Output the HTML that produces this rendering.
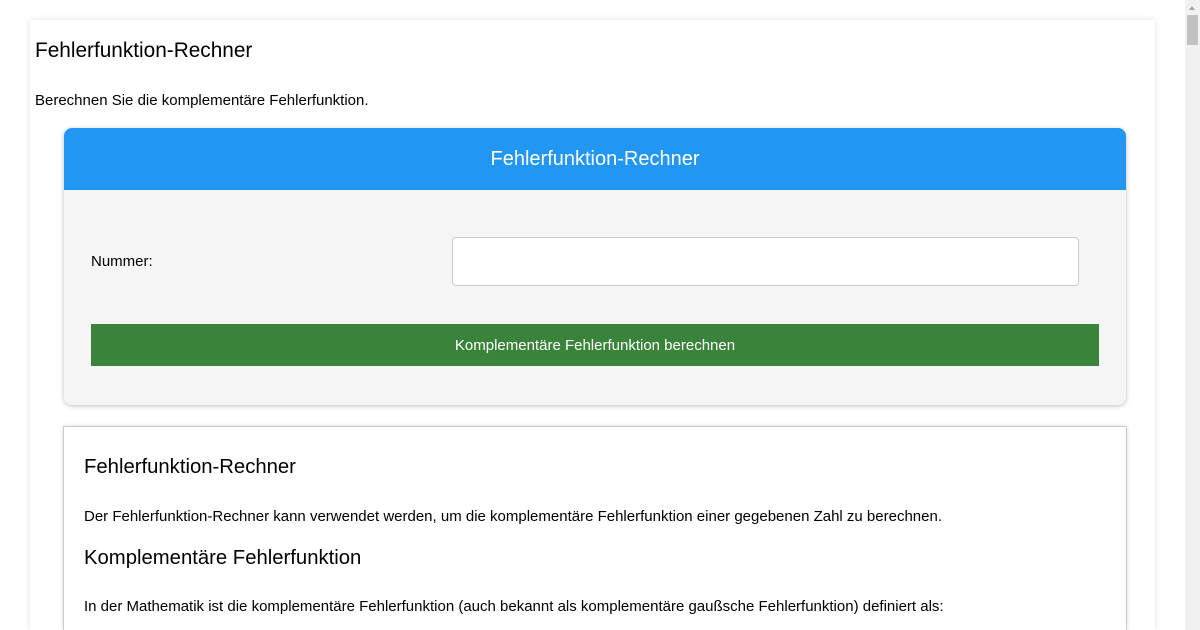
<!DOCTYPE html>
<html style="height:630px;overflow:hidden"><head><meta charset="utf-8"><style>
body{margin:0;background:#fff;font-family:"Liberation Sans",sans-serif;width:1200px;height:630px;overflow:hidden;position:relative;color:#000}
.sb{position:absolute;left:1185px;top:0;width:15px;height:630px;background:#f1f1f1}
.sb .th{position:absolute;left:2px;top:15px;width:11px;height:30px;background:#c1c1c1}
.sb .ar{position:absolute;left:4px;top:6px;width:0;height:0;border-left:3.5px solid transparent;border-right:3.5px solid transparent;border-bottom:4px solid #a3a3a3}
.wrap{position:absolute;left:30px;top:20px;width:1125px;height:610px;overflow:hidden;background:#fff;box-shadow:0 0 6px rgba(0,0,0,.12)}
h1{position:absolute;left:5px;top:19px;margin:0;font-size:20.8px;font-weight:normal}
.intro{position:absolute;left:5px;top:72px;font-size:15px}
.card{position:absolute;left:34px;top:108px;width:1062px;height:277px;background:#f5f5f5;border-radius:8px;box-shadow:0 1px 5px rgba(0,0,0,.25);overflow:hidden}
.hd{height:62px;background:#2196f3;color:#fff;font-size:20px;text-align:center;line-height:63px}
.lbl{position:absolute;left:27px;top:125px;font-size:15px}
.inp{position:absolute;left:388px;top:109px;width:625px;height:47px;background:#fff;border:1px solid #ccc;border-radius:4px}
.btn{position:absolute;left:27px;top:196px;width:1008px;height:42px;background:#3a833a;color:#fff;font-size:15px;text-align:center;line-height:43px}
.box{position:absolute;left:33px;top:406px;width:1062px;height:203px;border:1px solid #ccc;border-bottom:none;box-shadow:0 0 4px rgba(0,0,0,.15);background:#fff;overflow:hidden}
.box h2{position:absolute;left:20px;margin:0;font-size:20.3px;font-weight:normal}
.box p{position:absolute;left:20px;margin:0;font-size:15px}
</style></head><body>
<div class="wrap">
<h1>Fehlerfunktion-Rechner</h1>
<div class="intro">Berechnen Sie die komplementäre Fehlerfunktion.</div>
<div class="card"><div class="hd">Fehlerfunktion-Rechner</div>
<div class="lbl">Nummer:</div><div class="inp"></div>
<div class="btn">Komplementäre Fehlerfunktion berechnen</div></div>
<div class="box">
<h2 style="top:29px">Fehlerfunktion-Rechner</h2>
<p style="top:81px">Der Fehlerfunktion-Rechner kann verwendet werden, um die komplementäre Fehlerfunktion einer gegebenen Zahl zu berechnen.</p>
<h2 style="top:120px">Komplementäre Fehlerfunktion</h2>
<p style="top:171px">In der Mathematik ist die komplementäre Fehlerfunktion (auch bekannt als komplementäre gaußsche Fehlerfunktion) definiert als:</p>
</div>
</div>
<div class="sb"><div class="ar"></div><div class="th"></div></div>
</body></html>
